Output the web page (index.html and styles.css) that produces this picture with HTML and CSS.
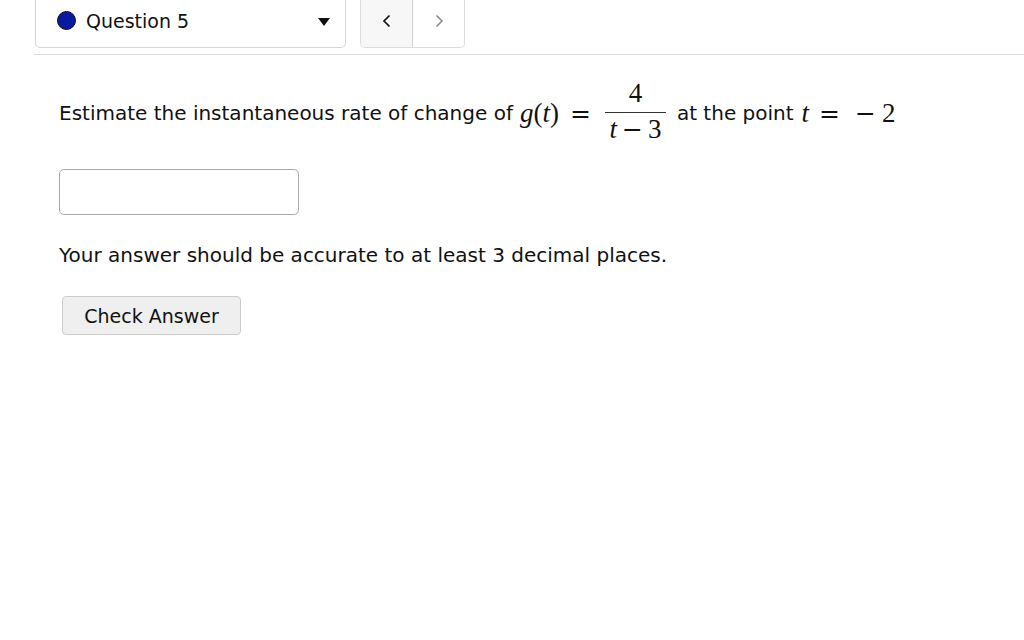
FILE: index.html
```html
<!DOCTYPE html>
<html>
<head>
<meta charset="utf-8">
<link rel="stylesheet" href="styles.css">
</head>
<body>
<div class="page">
  <div class="topbar">
    <div class="qselect">
      <span class="dot"></span>
      <span class="qlabel">Question 5</span>
      <span class="caret"></span>
    </div>
    <div class="nav">
      <span class="navbtn prev">
        <svg width="12" height="16" viewBox="0 0 12 16"><path d="M8.5 2.5 L3 8 L8.5 13.5" fill="none" stroke="#111" stroke-width="1.7"/></svg>
      </span>
      <span class="navbtn next">
        <svg width="12" height="16" viewBox="0 0 12 16"><path d="M3.5 2.5 L9 8 L3.5 13.5" fill="none" stroke="#888" stroke-width="1.5"/></svg>
      </span>
    </div>
  </div>
  <div class="rule"></div>
  <div class="content">
    <p class="question">
      <span>Estimate the instantaneous rate of change of</span>
      <span class="math gt"><i>g</i>(<i>t</i>)</span>
      <span class="sym eq1">=</span>
      <span class="frac"><span class="num">4</span><span class="den"><i>t</i><span class="sym minus">−</span>3</span></span>
      <span class="txt2">at the point</span>
      <span class="math tvar"><i>t</i></span>
      <span class="sym eq2">=</span>
      <span class="sym neg">−</span>
      <span class="math two">2</span>
    </p>
    <div class="answer"></div>
    <p class="note">Your answer should be accurate to at least 3 decimal places.</p>
    <button class="check">Check Answer</button>
  </div>
</div>
</body>
</html>
```
FILE: styles.css
```css
html, body {
  margin: 0;
  padding: 0;
  background: #fff;
}
body {
  font-family: "DejaVu Sans", sans-serif;
  color: #111;
}
.page {
  width: 1024px;
}
.topbar {
  display: flex;
  align-items: flex-start;
  padding-left: 35px;
  gap: 14px;
}
.qselect {
  box-sizing: border-box;
  width: 311px;
  height: 48px;
  border: 1px solid #d6d6d6;
  border-top: none;
  border-radius: 0 0 5px 5px;
  display: flex;
  align-items: center;
  padding: 0 15px 6px 21px;
}
.dot {
  width: 19px;
  height: 19px;
  border-radius: 50%;
  background: #0a1aa0;
  border: 1px solid #111;
  box-sizing: border-box;
  flex: none;
}
.qlabel {
  margin-left: 10px;
  font-size: 19px;
  flex: 1;
}
.caret {
  width: 0;
  height: 0;
  border-left: 6px solid transparent;
  border-right: 6px solid transparent;
  border-top: 8px solid #111;
  margin-top: 2px;
}
.nav {
  display: flex;
  height: 48px;
  box-sizing: border-box;
  border: 1px solid #dcdcdc;
  border-top: none;
  border-radius: 0 0 5px 5px;
  overflow: hidden;
}
.navbtn {
  width: 51px;
  display: flex;
  align-items: center;
  justify-content: center;
  padding-bottom: 6px;
}
.prev {
  background: #f7f7f7;
  border-right: 1px solid #d0d0d0;
}
.next {
  background: #fff;
}
.rule {
  margin: 6px 0 0 34px;
  height: 1px;
  background: #dcdcdc;
}
.content {
  padding-left: 59px;
}
.question {
  margin: 0;
  padding-top: 25px;
  font-size: 20px;
  display: flex;
  align-items: center;
  height: 66px;
}
.math {
  font-family: "Liberation Serif", "DejaVu Serif", serif;
  font-size: 27px;
}
.sym {
  font-family: "DejaVu Serif", serif;
  font-size: 25px;
}
.gt {
  margin-left: 7px;
}
.eq1 {
  margin-left: 11px;
}
.frac {
  display: inline-flex;
  flex-direction: column;
  align-items: stretch;
  text-align: center;
  font-family: "Liberation Serif", "DejaVu Serif", serif;
  font-size: 27px;
  margin: 0 0 4px 14px;
  width: 61px;
}
.num {
  padding-bottom: 5px;
  line-height: 28px;
}
.den {
  border-top: 1px solid #333;
  padding-top: 2px;
  line-height: 28px;
  display: flex;
  justify-content: center;
  align-items: baseline;
}
.minus {
  margin: 0 5px;
}
.txt2 {
  margin-left: 11px;
}
.tvar {
  margin-left: 8px;
}
.eq2 {
  margin-left: 10px;
}
.neg {
  margin-left: 15px;
}
.two {
  margin-left: 6px;
}
.answer {
  margin-top: 23px;
  width: 240px;
  height: 46px;
  box-sizing: border-box;
  border: 1px solid #aaa;
  border-radius: 5px;
}
.note {
  margin: 28px 0 0;
  font-size: 20px;
}
.check {
  margin: 29px 0 0 3px;
  width: 179px;
  height: 39px;
  font-family: "DejaVu Sans", sans-serif;
  font-size: 19px;
  color: #111;
  background: #efefef;
  border: 1px solid #ccc;
  border-radius: 4px;
}
```
